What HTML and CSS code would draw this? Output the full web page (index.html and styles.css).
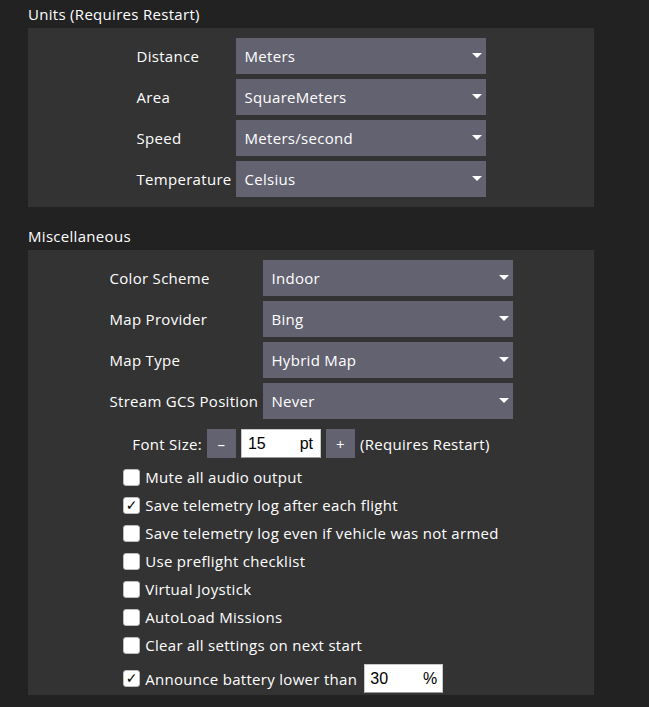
FILE: index.html
```html
<!DOCTYPE html>
<html>
<head>
<meta charset="utf-8">
<link rel="stylesheet" href="styles.css">
</head>
<body>
<div class="page">
  <div class="section-title">Units (Requires Restart)</div>
  <div class="panel panel-units">
    <div class="grid grid-units">
      <div class="label">Distance</div>
      <div class="combo"><span>Meters</span><i class="arrow"></i></div>
      <div class="label">Area</div>
      <div class="combo"><span>SquareMeters</span><i class="arrow"></i></div>
      <div class="label">Speed</div>
      <div class="combo"><span>Meters/second</span><i class="arrow"></i></div>
      <div class="label">Temperature</div>
      <div class="combo"><span>Celsius</span><i class="arrow"></i></div>
    </div>
  </div>

  <div class="section-title second">Miscellaneous</div>
  <div class="panel panel-misc">
    <div class="grid grid-misc">
      <div class="label">Color Scheme</div>
      <div class="combo"><span>Indoor</span><i class="arrow"></i></div>
      <div class="label">Map Provider</div>
      <div class="combo"><span>Bing</span><i class="arrow"></i></div>
      <div class="label">Map Type</div>
      <div class="combo"><span>Hybrid Map</span><i class="arrow"></i></div>
      <div class="label">Stream GCS Position</div>
      <div class="combo"><span>Never</span><i class="arrow"></i></div>
    </div>

    <div class="fontsize">
      <span class="label">Font Size:</span>
      <div class="btn">–</div>
      <div class="field field-font"><span>15</span><span>pt</span></div>
      <div class="btn">+</div>
      <span class="label">(Requires Restart)</span>
    </div>

    <div class="checks">
      <div class="check-row"><span class="box"></span><span class="label">Mute all audio output</span></div>
      <div class="check-row"><span class="box">✓</span><span class="label">Save telemetry log after each flight</span></div>
      <div class="check-row"><span class="box"></span><span class="label">Save telemetry log even if vehicle was not armed</span></div>
      <div class="check-row"><span class="box"></span><span class="label">Use preflight checklist</span></div>
      <div class="check-row"><span class="box"></span><span class="label">Virtual Joystick</span></div>
      <div class="check-row"><span class="box"></span><span class="label">AutoLoad Missions</span></div>
      <div class="check-row"><span class="box"></span><span class="label">Clear all settings on next start</span></div>
      <div class="check-row last"><span class="box">✓</span><span class="label">Announce battery lower than</span><div class="field field-batt"><span>30</span><span>%</span></div></div>
    </div>
  </div>
</div>
</body>
</html>
```

FILE: styles.css
```css
html, body {
  margin: 0;
  padding: 0;
  background: #222222;
}
body {
  font-family: "Open Sans", "DejaVu Sans", sans-serif;
  font-size: 15px;
  letter-spacing: 0.3px;
  color: #ffffff;
  width: 649px;
  height: 707px;
  overflow: hidden;
}
.page {
  padding-left: 28px;
  width: 566px;
}
.section-title {
  height: 28px;
  line-height: 28px;
}
.section-title.second {
  margin-top: 15px;
}
.panel {
  background: #333333;
  width: 566px;
  box-sizing: border-box;
}
.panel-units {
  padding: 10px 0;
}
.panel-misc {
  padding: 10px 0 2px;
}
.grid {
  display: grid;
  row-gap: 5px;
  column-gap: 5px;
  justify-content: center;
  align-items: center;
}
.grid-units {
  grid-template-columns: 94px 250px;
}
.grid-misc {
  grid-template-columns: 148px 250px;
}
.label {
  white-space: nowrap;
}
.combo {
  position: relative;
  height: 36px;
  background: #636270;
  display: flex;
  align-items: center;
  padding-left: 9px;
}
.arrow {
  position: absolute;
  right: 4px;
  top: 15px;
  width: 0;
  height: 0;
  border-left: 5px solid transparent;
  border-right: 5px solid transparent;
  border-top: 5px solid #ffffff;
}
.fontsize {
  display: flex;
  justify-content: center;
  align-items: center;
  gap: 5px;
  margin-top: 10px;
  height: 29px;
}
.btn {
  width: 29px;
  height: 29px;
  background: #636270;
  display: flex;
  align-items: center;
  justify-content: center;
  font-size: 15px;
}
.field {
  background: #ffffff;
  color: #000000;
  font-family: "Liberation Sans", Arial, sans-serif;
  font-size: 16px;
  letter-spacing: 0;
  display: flex;
  justify-content: space-between;
  align-items: center;
  box-sizing: border-box;
  height: 29px;
  border: 1px solid #c8c8c8;
  border-bottom-color: #9a9a9a;
}
.field-font {
  width: 80px;
  padding: 0 7px 0 6px;
}
.field-batt {
  width: 79px;
  padding: 0 5px 0 5px;
  margin-left: 2px;
}
.checks {
  display: flex;
  flex-direction: column;
  align-items: flex-start;
  width: max-content;
  margin: 5px auto 0;
}
.check-row {
  height: 28px;
  display: flex;
  align-items: center;
  gap: 5px;
}
.check-row.last {
  height: 29px;
  margin-top: 5px;
}
.box {
  width: 17px;
  height: 17px;
  box-sizing: border-box;
  background: #ffffff;
  border: 1px solid #bdbdbd;
  border-radius: 3px;
  color: #000000;
  font-family: "DejaVu Sans", sans-serif;
  font-size: 14px;
  letter-spacing: 0;
  line-height: 15px;
  text-align: center;
  font-weight: bold;
}
```
